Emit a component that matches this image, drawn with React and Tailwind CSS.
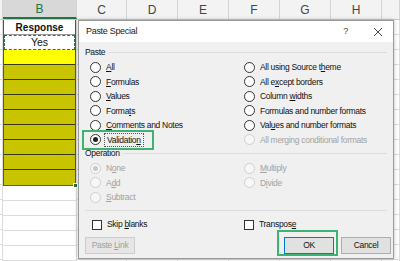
import React from "react";

const cols = [
  { w: 3, label: "" },
  { w: 74, label: "B", sel: true },
  { w: 50, label: "C" },
  { w: 51, label: "D" },
  { w: 51, label: "E" },
  { w: 51, label: "F" },
  { w: 51, label: "G" },
  { w: 51, label: "H" },
  { w: 18, label: "" },
];

const Radio = ({ label, u, checked, disabled }) => {
  const idx = u ? label.indexOf(u) : -1;
  return (
    <div className="flex items-center h-[14.5px] whitespace-nowrap">
      <span
        className={`w-[11px] h-[11px] shrink-0 rounded-full border flex items-center justify-center ${
          disabled ? "border-[#cfcfcf] bg-[#f7f7f7]" : "border-[#333] bg-white"
        }`}
      >
        {checked && (
          <span
            className={`w-[5px] h-[5px] rounded-full ${
              disabled ? "bg-[#c8c8c8]" : "bg-[#222]"
            }`}
          ></span>
        )}
      </span>
      <span className={`ml-[5px] ${disabled ? "text-[#a2a2a2]" : "text-[#111]"}`}>
        {idx >= 0 ? (
          <>
            {label.slice(0, idx)}
            <span className="underline">{label[idx]}</span>
            {label.slice(idx + 1)}
          </>
        ) : (
          label
        )}
      </span>
    </div>
  );
};

const Check = ({ label, u }) => {
  const idx = label.indexOf(u);
  return (
    <div className="flex items-center h-[14px] whitespace-nowrap">
      <span className="w-[10px] h-[10px] shrink-0 border border-[#333] bg-white"></span>
      <span className="ml-[5px] text-[#111]">
        {label.slice(0, idx)}
        <span className="underline">{label[idx]}</span>
        {label.slice(idx + 1)}
      </span>
    </div>
  );
};

export default function App() {
  const bRows = [];
  bRows.push(
    <div
      key="r"
      className="h-[15px] flex items-center justify-center bg-white font-bold text-[10px] text-[#111] border-b border-[#9a9a9a]"
    >
      Response
    </div>
  );
  bRows.push(
    <div
      key="y"
      className="h-[15px] flex items-center justify-center bg-white text-[10.5px] text-[#111] border border-dashed border-[#1f7a4a]"
    >
      Yes
    </div>
  );
  bRows.push(<div key="y0" className="h-[15px] bg-[#ffff00] border-b border-[#3a3a10]"></div>);
  for (let i = 0; i < 8; i++)
    bRows.push(
      <div
        key={"o" + i}
        className={`h-[15px] bg-[#c9c400] ${i < 7 ? "border-b border-[#3a3a10]" : ""}`}
      ></div>
    );

  return (
    <div className="relative w-[400px] h-[261px] overflow-hidden bg-white font-['Liberation_Sans',sans-serif]">
      {/* column headers */}
      <div className="flex h-[20px] bg-[#f3f3f3] border-b border-[#c8c8c8]">
        {cols.map((c, i) => (
          <div
            key={i}
            style={{ width: c.w }}
            className={`flex items-center justify-center text-[12px] border-r border-[#d4d4d4] ${
              c.sel
                ? "bg-[#d8d8d8] text-[#217346] border-b-2 border-b-[#217346]"
                : "text-[#444]"
            }`}
          >
            {c.label}
          </div>
        ))}
      </div>
      {/* grid body */}
      <div className="flex">
        {cols.map((c, i) => (
          <div
            key={i}
            style={{ width: c.w }}
            className="border-r border-[#dcdcdc] flex flex-col"
          >
            {c.sel ? (
              <>
                <div className="relative border-x border-b border-[#217346]">
                  {bRows}
                  <span className="absolute right-[-3px] bottom-[-3px] w-[5px] h-[5px] bg-[#217346] border border-white"></span>
                </div>
                {Array.from({ length: 5 }).map((_, k) => (
                  <div key={k} className="h-[15px] border-b border-[#dcdcdc]"></div>
                ))}
              </>
            ) : (
              Array.from({ length: 16 }).map((_, k) => (
                <div key={k} className="h-[15px] border-b border-[#dcdcdc]"></div>
              ))
            )}
          </div>
        ))}
      </div>

      {/* dialog */}
      <div className="absolute left-[78px] top-[20px] w-[316px] h-[239px] border border-[#9a9a9a] bg-[#f0f0f0] shadow-[0_0_4px_rgba(0,0,0,0.25)] flex flex-col text-[8.5px] tracking-[-0.3px] leading-none">
        <div className="h-[21px] bg-white flex items-center pl-[7px] pr-[10px] text-[9px] text-[#222]">
          <span className="flex-1">Paste Special</span>
          <span className="text-[#444] mr-[25px]">?</span>
          <svg width="10" height="10" viewBox="0 0 10 10">
            <path d="M1 1L9 9M9 1L1 9" stroke="#444" strokeWidth="1" />
          </svg>
        </div>
        <div className="flex-1 px-[6px] pt-[4px] flex flex-col">
          <div className="flex items-center h-[12px] text-[#111]">
            <span>Paste</span>
            <span className="flex-1 ml-[3px] border-t border-[#dcdcdc]"></span>
          </div>
          <div className="flex mt-[2px] pl-[5px]">
            <div className="w-[154px] shrink-0 flex flex-col">
              <Radio label="All" u="A" />
              <Radio label="Formulas" u="F" />
              <Radio label="Values" u="V" />
              <Radio label="Formats" u="t" />
              <Radio label="Comments and Notes" u="C" />
              <div className="relative flex items-center h-[14.5px]">
                <span className="absolute left-[-8px] top-[-3px] w-[72px] h-[20px] border-2 border-[#3cb371]"></span>
                <span className="w-[11px] h-[11px] rounded-full border border-[#333] bg-white flex items-center justify-center">
                  <span className="w-[5px] h-[5px] rounded-full bg-[#222]"></span>
                </span>
                <span className="ml-[3px] px-[2px] py-[2px] border border-dotted border-[#555] text-[#111]">
                  Validatio<span className="underline">n</span>
                </span>
              </div>
            </div>
            <div className="flex flex-col">
              <Radio label="All using Source theme" u="h" />
              <Radio label="All except borders" u="x" />
              <Radio label="Column widths" u="w" />
              <Radio label="Formulas and number formats" u="R" />
              <Radio label="Values and number formats" u="u" />
              <Radio label="All merging conditional formats" disabled />
            </div>
          </div>
          <div className="flex items-center h-[12px] mt-[0px] text-[#111]">
            <span>Operation</span>
            <span className="flex-1 ml-[3px] border-t border-[#dcdcdc]"></span>
          </div>
          <div className="flex mt-[2px] pl-[5px]">
            <div className="w-[154px] shrink-0 flex flex-col">
              <Radio label="None" u="o" checked disabled />
              <Radio label="Add" u="d" disabled />
              <Radio label="Subtract" u="S" disabled />
            </div>
            <div className="flex flex-col">
              <Radio label="Multiply" u="M" disabled />
              <Radio label="Divide" u="i" disabled />
            </div>
          </div>
          <div className="mt-[5px] border-t border-[#dcdcdc]"></div>
          <div className="flex mt-[7px] pl-[7px]">
            <div className="w-[152px] shrink-0">
              <Check label="Skip blanks" u="b" />
            </div>
            <Check label="Transpose" u="e" />
          </div>
          <div className="flex items-center mt-[5px]">
            <div className="w-[50px] h-[17px] border border-[#cdcdcd] bg-[#e6e6e6] text-[#a0a0a0] flex items-center justify-center">
              Paste <span className="underline ml-[2px]">L</span>ink
            </div>
            <div className="flex-1"></div>
            <div className="relative">
              <span className="absolute left-[-7px] top-[-7px] w-[61px] h-[26px] border-2 border-[#3cb371]"></span>
              <div className="w-[50px] h-[17px] border border-[#0078d7] bg-[#e1e1e1] text-[#111] flex items-center justify-center">
                OK
              </div>
            </div>
            <div className="ml-[7px] mr-[-4px] w-[50px] h-[17px] border border-[#adadad] bg-[#e1e1e1] text-[#111] flex items-center justify-center">
              Cancel
            </div>
          </div>
        </div>
      </div>
    </div>
  );
}
